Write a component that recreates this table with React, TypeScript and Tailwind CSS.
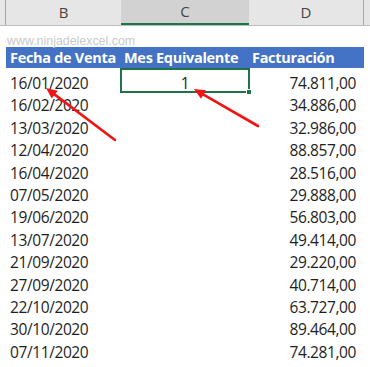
const rows = [
  { fecha: "16/01/2020", mes: "1", total: "74.811,00" },
  { fecha: "16/02/2020", mes: "", total: "34.886,00" },
  { fecha: "13/03/2020", mes: "", total: "32.986,00" },
  { fecha: "12/04/2020", mes: "", total: "88.857,00" },
  { fecha: "16/04/2020", mes: "", total: "28.516,00" },
  { fecha: "07/05/2020", mes: "", total: "29.888,00" },
  { fecha: "19/06/2020", mes: "", total: "56.803,00" },
  { fecha: "13/07/2020", mes: "", total: "49.414,00" },
  { fecha: "21/09/2020", mes: "", total: "29.220,00" },
  { fecha: "27/09/2020", mes: "", total: "40.714,00" },
  { fecha: "22/10/2020", mes: "", total: "63.727,00" },
  { fecha: "30/10/2020", mes: "", total: "89.464,00" },
  { fecha: "07/11/2020", mes: "", total: "74.281,00" },
];

function Arrow({ x1, y1, x2, y2 }: { x1: number; y1: number; x2: number; y2: number }) {
  const a = Math.atan2(y2 - y1, x2 - x1);
  const len = 11;
  const w = 5;
  const bx = x2 - Math.cos(a) * len;
  const by = y2 - Math.sin(a) * len;
  const p1 = `${bx + Math.sin(a) * w},${by - Math.cos(a) * w}`;
  const p2 = `${bx - Math.sin(a) * w},${by + Math.cos(a) * w}`;
  return (
    <g>
      <line x1={x1} y1={y1} x2={bx} y2={by} stroke="#f01414" strokeWidth={2.6} strokeLinecap="round" />
      <polygon points={`${x2},${y2} ${p1} ${p2}`} fill="#f01414" />
    </g>
  );
}

export default function App() {
  return (
    <div className="relative w-[370px] h-[367px] overflow-hidden bg-white font-['Open_Sans',sans-serif] text-[#1e1e1e]">
      {/* column letters */}
      <div className="flex h-[26px] bg-[#e6e6e6] border-b border-[#bcbcbc] text-[15px] text-[#444]">
        <div className="w-[6px] border-r border-[#a8a8a8]" />
        <div className="w-[115px] flex items-center justify-center">B</div>
        <div className="w-[128px] flex items-center justify-center bg-[#d2d2d2] border-b-2 border-[#217346]">C</div>
        <div className="w-[115px] flex items-center justify-center border-r border-[#a8a8a8]">D</div>
        <div className="flex-1" />
      </div>

      {/* watermark */}
      <div className="h-[21px] pl-[7px] pt-[8px] text-[12.4px] leading-[14px] text-[#c9c9c9] font-['Liberation_Sans',sans-serif]">
        www.ninjadelexcel.com
      </div>

      <div className="ml-[6px] w-[358px]">
        <div className="grid grid-cols-[115px_128px_115px] h-[21px] bg-[#4472c4] text-white font-bold text-[14.5px] tracking-[-0.3px] items-center">
          <div className="pl-[4px]">Fecha de Venta</div>
          <div className="pl-[3px]">Mes Equivalente</div>
          <div className="pl-[3px]">Facturación</div>
        </div>
        {rows.map((r) => (
          <div
            key={r.fecha}
            className="grid grid-cols-[115px_128px_115px] h-[22.4px] items-center pt-[4px] text-[15.5px] tracking-[-0.4px]"
          >
            <div className="pl-[4px]">{r.fecha}</div>
            <div className="text-center">{r.mes}</div>
            <div className="text-right pr-[8px]">{r.total}</div>
          </div>
        ))}
      </div>

      {/* selected cell */}
      <div className="absolute left-[120px] top-[68px] w-[130px] h-[25px] border-2 border-[#217346]">
        <div className="absolute -right-[4px] -bottom-[4px] w-[6px] h-[6px] bg-[#217346] border border-white" />
      </div>

      <svg className="absolute inset-0" width={370} height={367}>
        <Arrow x1={115} y1={140} x2={46} y2={88} />
        <Arrow x1={258} y1={126} x2={194} y2={89} />
      </svg>
    </div>
  );
}
